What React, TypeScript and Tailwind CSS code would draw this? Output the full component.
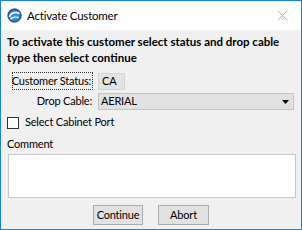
export default function App() {
  return (
    <div className="w-[302px] h-[230px] border border-[#1a84d8] bg-[#f0f0f0] flex flex-col text-[11px] tracking-[-0.2px] text-black font-['Lato','Noto_Sans',sans-serif] overflow-hidden whitespace-nowrap">
      {/* title bar */}
      <div className="h-[29px] bg-white flex items-center pl-[6px] pr-[10px] shrink-0">
        <svg width="15" height="15" viewBox="0 0 16 16" className="shrink-0">
          <circle cx="8" cy="8" r="7.2" fill="#1d5fa8" />
          <circle cx="8" cy="8" r="5.6" fill="#3b8fd6" />
          <path d="M2.5 9.5 C4 5 10 3.5 13.5 6" stroke="#fff" strokeWidth="1.6" fill="none" />
          <path d="M3.5 12 C6 9.5 10 9 12.5 10.5" stroke="#fff" strokeWidth="1.2" fill="none" />
          <circle cx="8" cy="8" r="7.2" fill="none" stroke="#0d3f7a" strokeWidth="0.8" />
        </svg>
        <span className="ml-[5px] text-[11.5px] leading-none">Activate Customer</span>
        <svg width="11" height="11" viewBox="0 0 11 11" className="ml-auto mr-[3px]">
          <path d="M0.5 0.5 L10.5 10.5 M10.5 0.5 L0.5 10.5" stroke="#b3b3b3" strokeWidth="1" />
        </svg>
      </div>

      <div className="flex flex-col px-[6px]">
        <p className="mt-[4px] max-w-[289px] font-bold text-[11.5px] leading-[16px] tracking-normal whitespace-normal">
          To activate this customer select status and drop cable type then select continue
        </p>

        <div className="mt-[6px] flex items-center h-[18px]">
          <div className="ml-[5px] w-[81px] h-[18px] border border-dotted border-[#333] flex items-center justify-end pr-[1px]">
            Customer Status:
          </div>
          <div className="ml-[5px] w-[27px] h-[17px] bg-[#e3e3e3] border border-[#d4d4d4] flex items-center pl-[3px]">
            CA
          </div>
        </div>

        <div className="mt-[3px] flex items-center h-[17px]">
          <div className="ml-[5px] w-[81px] flex justify-end pr-[1px]">Drop Cable:</div>
          <div className="ml-[5px] w-[196px] h-[17px] bg-[#e1e1e1] border border-[#c4c4c4] flex items-center pl-[2px] pr-[4px]">
            <span>AERIAL</span>
            <svg width="7" height="4" viewBox="0 0 7 4" className="ml-auto">
              <path d="M0 0 H7 L3.5 4 Z" fill="#000" />
            </svg>
          </div>
        </div>

        <div className="mt-[6px] flex items-center h-[13px]">
          <div className="w-[12px] h-[12px] bg-white border border-[#333]" />
          <span className="ml-[6px]">Select Cabinet Port</span>
        </div>

        <div className="mt-[7px] leading-[16px]">Comment</div>

        <div className="mt-[2px] ml-[1px] w-[288px] h-[44px] bg-white border border-[#c8c8c8]" />

        <div className="mt-[7px] flex justify-center gap-[15px]">
          <button className="w-[50px] h-[20px] bg-[#e1e1e1] border border-[#adadad] flex items-center justify-center">
            Continue
          </button>
          <button className="w-[51px] h-[20px] bg-[#e1e1e1] border border-[#adadad] flex items-center justify-center">
            Abort
          </button>
        </div>
      </div>
    </div>
  );
}
